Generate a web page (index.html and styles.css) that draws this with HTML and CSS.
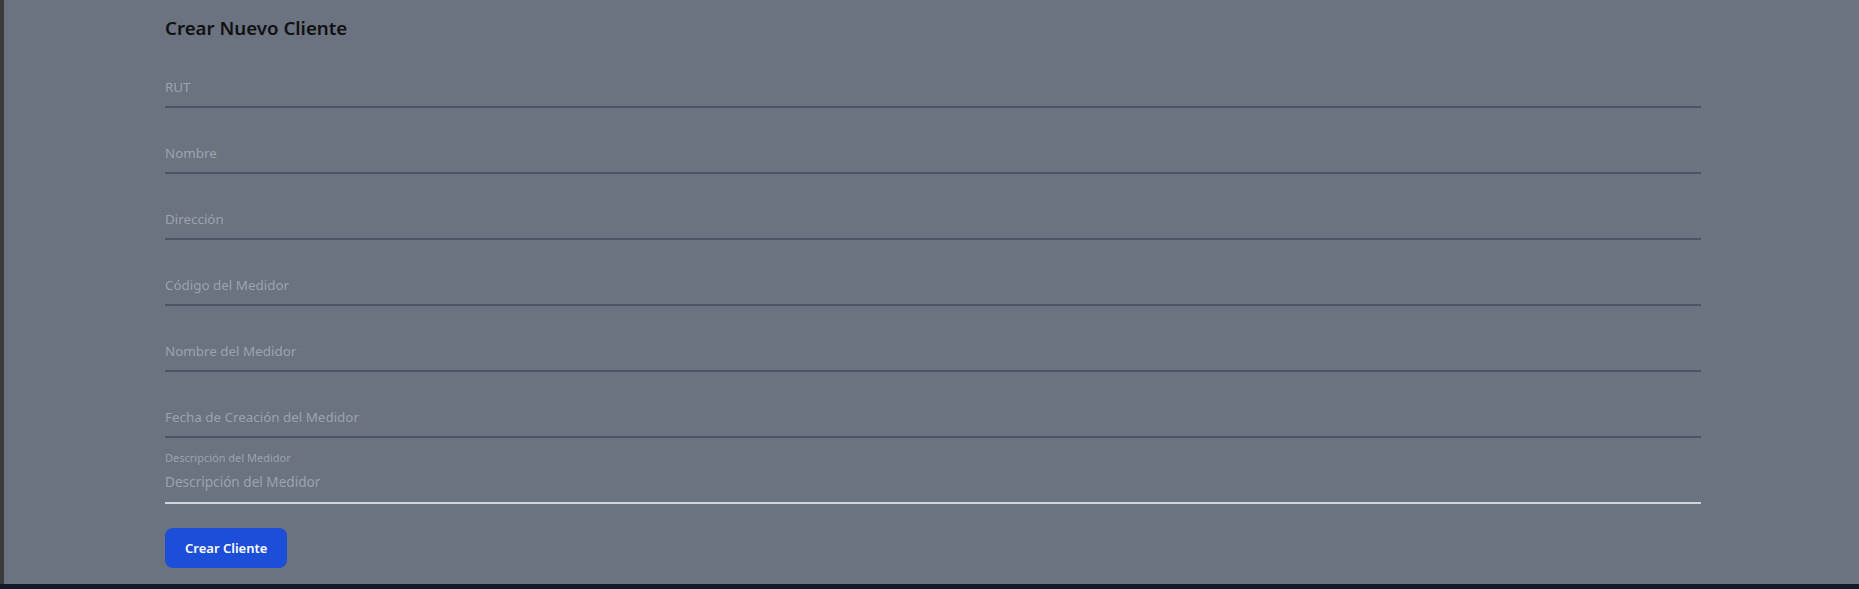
FILE: index.html
```html
<!DOCTYPE html>
<html lang="es">
<head>
<meta charset="utf-8">
<title>Crear Nuevo Cliente</title>
<link rel="stylesheet" href="styles.css">
</head>
<body>
<div class="frame">
  <div class="edge"></div>
  <main class="panel">
    <div class="container">
      <h2 class="title">Crear Nuevo Cliente</h2>
      <form class="form">
        <div class="field">
          <input class="input" id="rut" type="text">
          <label class="label" for="rut">RUT</label>
        </div>
        <div class="field">
          <input class="input" id="nombre" type="text">
          <label class="label" for="nombre">Nombre</label>
        </div>
        <div class="field">
          <input class="input" id="direccion" type="text">
          <label class="label" for="direccion">Dirección</label>
        </div>
        <div class="field">
          <input class="input" id="codigo" type="text">
          <label class="label" for="codigo">Código del Medidor</label>
        </div>
        <div class="field">
          <input class="input" id="nombreMedidor" type="text">
          <label class="label" for="nombreMedidor">Nombre del Medidor</label>
        </div>
        <div class="field field-last">
          <input class="input" id="fecha" type="text">
          <label class="label" for="fecha">Fecha de Creación del Medidor</label>
        </div>
        <div class="desc">
          <label class="desc-label" for="descripcion">Descripción del Medidor</label>
          <input class="desc-input" id="descripcion" type="text" placeholder="Descripción del Medidor">
        </div>
        <button class="btn" type="button">Crear Cliente</button>
      </form>
    </div>
  </main>
</div>
</body>
</html>
```
FILE: styles.css
```css
html, body {
  margin: 0;
  padding: 0;
}
body {
  background: #111827;
  font-family: "Noto Sans", "Open Sans", sans-serif;
  width: 1859px;
  height: 589px;
  overflow: hidden;
}
.frame {
  display: flex;
  height: 584px;
}
.edge {
  width: 4px;
  background: #3b3b3b;
  flex: none;
}
.panel {
  flex: 1;
  background: #6b7280;
}
.container {
  width: 1536px;
  margin-left: 161px;
  padding-top: 14px;
}
.title {
  margin: 0 0 24px;
  font-size: 18.7px;
  line-height: 28px;
  font-weight: 600;
  color: #111111;
}
.form {
  display: flex;
  flex-direction: column;
}
.field {
  position: relative;
  margin-bottom: 24px;
}
.field-last {
  margin-bottom: 12px;
}
.input {
  display: block;
  box-sizing: border-box;
  width: 100%;
  height: 42px;
  margin: 0;
  padding: 10px 0;
  border: 0;
  border-bottom: 2px solid #4b5563;
  background: transparent;
  font: inherit;
  font-size: 14px;
  color: #fff;
  outline: none;
}
.label {
  position: absolute;
  left: 0;
  top: 11px;
  font-size: 13.4px;
  line-height: 20px;
  color: #9ca3af;
}
.desc {
  display: flex;
  flex-direction: column;
}
.desc-label {
  font-size: 11px;
  line-height: 16px;
  color: #9ca3af;
}
.desc-input {
  display: block;
  box-sizing: border-box;
  width: 100%;
  height: 38px;
  margin: 0;
  padding: 4px 0 10px;
  border: 0;
  border-bottom: 2px solid #d1d5db;
  background: transparent;
  font: inherit;
  font-size: 13.6px;
  line-height: 22px;
  color: #fff;
  outline: none;
}
.desc-input::placeholder {
  color: #9ca3af;
}
.btn {
  align-self: flex-start;
  margin-top: 24px;
  height: 40px;
  padding: 0 20px;
  border: 0;
  border-radius: 8px;
  background: #1d4ed8;
  color: #fff;
  font: inherit;
  font-size: 13px;
  font-weight: 600;
}
```
